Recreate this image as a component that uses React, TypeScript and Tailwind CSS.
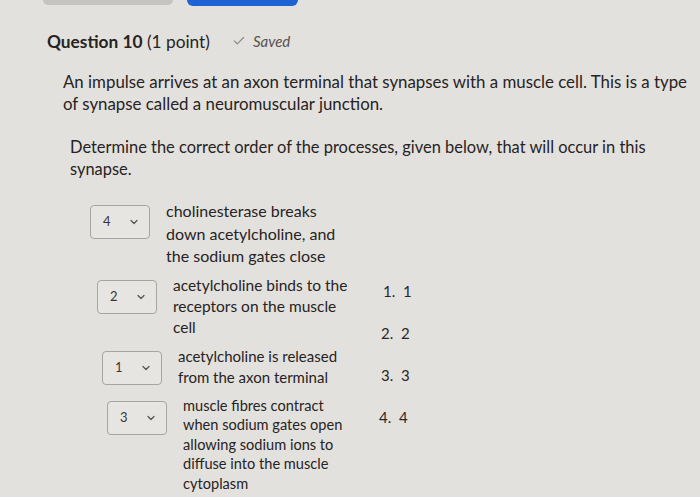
import { ChevronDown, Check } from "lucide-react";

type Item = { value: string; text: string; ml: string; tw: string; lh: string; mt: string; fs: string };

const items: Item[] = [
  { value: "4", text: "cholinesterase breaks down acetylcholine, and the sodium gates close", ml: "ml-[90px]", tw: "w-[185px]", lh: "leading-[22.5px]", mt: "mt-0", fs: "text-[16px]" },
  { value: "2", text: "acetylcholine binds to the receptors on the muscle cell", ml: "ml-[97px]", tw: "w-[182px]", lh: "leading-[21px]", mt: "mt-[7px]", fs: "text-[15.5px]" },
  { value: "1", text: "acetylcholine is released from the axon terminal", ml: "ml-[102px]", tw: "w-[175px]", lh: "leading-[21px]", mt: "mt-[8px]", fs: "text-[15px]" },
  { value: "3", text: "muscle fibres contract when sodium gates open allowing sodium ions to diffuse into the muscle cytoplasm", ml: "ml-[107px]", tw: "w-[162px]", lh: "leading-[19.5px]", mt: "mt-[8px]", fs: "text-[14.6px]" },
];

const Row = ({ item }: { item: Item }) => (
  <div className={`flex items-start ${item.ml} ${item.mt}`}>
    <div className="mt-[5px] flex h-[34px] w-[60px] shrink-0 items-center justify-between rounded-[4px] border border-[#a8a5a0] bg-[#e7e5e1] pl-[12px] pr-[9px] text-[13px] text-[#3a3636]">
      <span>{item.value}</span>
      <ChevronDown size={12} strokeWidth={2.5} className="text-[#555]" />
    </div>
    <p className={`ml-[16px] ${item.tw} ${item.lh} ${item.fs} text-[#272323]`}>{item.text}</p>
  </div>
);

const App = () => {
  return (
    <div className="relative h-[497px] w-[700px] overflow-hidden bg-[#e3e1dd] font-['Lato',sans-serif] text-[#272323]">
      <div className="flex">
        <div className="ml-[43px] h-[5px] w-[130px] rounded-b-md bg-[#c6c4c1]" />
        <div className="ml-[14px] h-[6px] w-[111px] rounded-b-md bg-[#1d63d4]" />
      </div>

      <div className="ml-[47px] mt-[23px] flex items-baseline leading-[24px]">
        <h2 className="text-[17.3px]">
          <span className="font-bold">Question 10</span> (1 point)
        </h2>
        <span className="ml-[22px] flex items-center text-[15px] italic text-[#555151]">
          <Check size={14} strokeWidth={2} className="mr-[7px] text-[#8d8a87]" />
          Saved
        </span>
      </div>

      <p className="ml-[63px] mt-[17px] w-[630px] text-[16.85px] leading-[22px]">
        An impulse arrives at an axon terminal that synapses with a muscle cell. This is a type of synapse called a neuromuscular junction.
      </p>

      <p className="ml-[70px] mt-[21px] w-[600px] text-[16.45px] leading-[22px]">
        Determine the correct order of the processes, given below, that will occur in this synapse.
      </p>

      <div className="mt-[20px] flex">
        <div className="w-[381px] shrink-0">
          {items.map((it) => (
            <Row key={it.value + it.text} item={it} />
          ))}
        </div>
        <ol className="mt-[81px] text-[15px] leading-[20px] text-[#2b2727]">
          {["1", "2", "3", "4"].map((n, i) => (
            <li key={n} className={`flex ${i > 0 ? "mt-[22px]" : ""} ${i === 3 ? "-ml-[2px]" : i === 0 ? "ml-[2px]" : ""}`}>
              <span className="w-[20px]">{n}.</span>
              <span>{n}</span>
            </li>
          ))}
        </ol>
      </div>
    </div>
  );
};

export default App;
